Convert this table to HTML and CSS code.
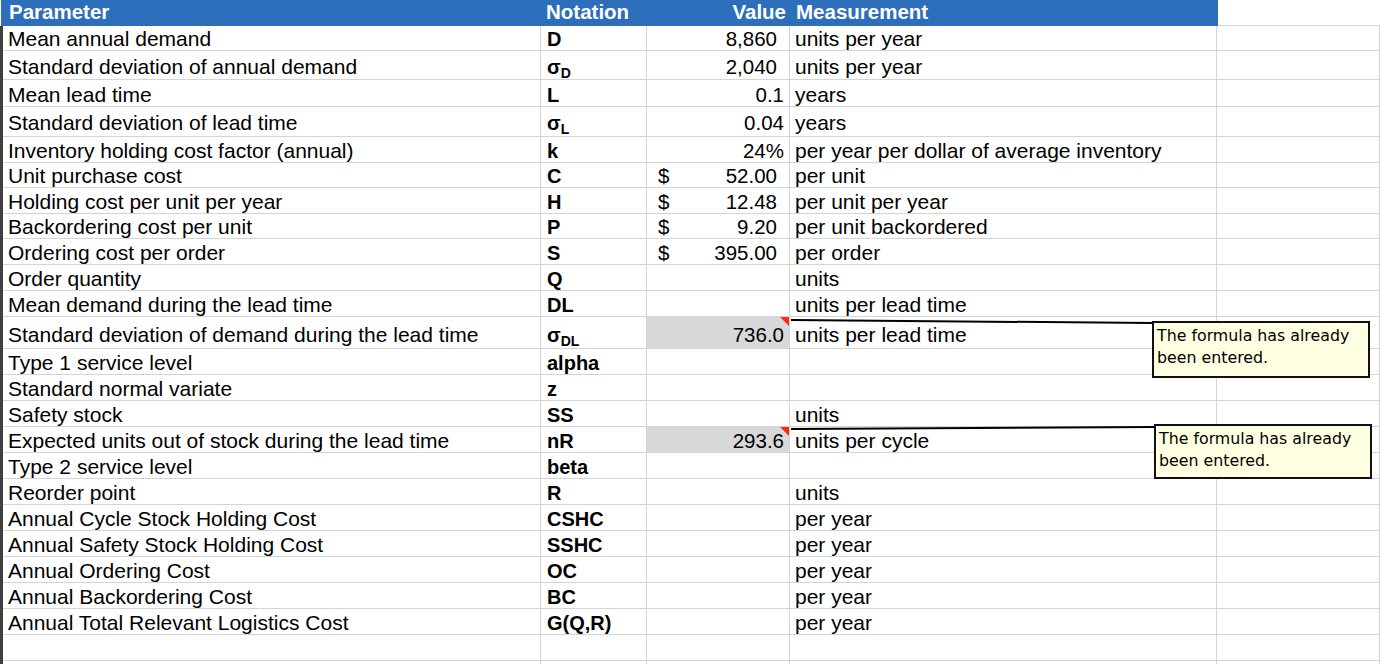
FILE: index.html
```html
<!DOCTYPE html>
<html>
<head>
<meta charset="utf-8">
<link rel="stylesheet" href="styles.css">
</head>
<body>
<div class="sheet">
  <div class="row head h26">
    <div class="c a hd">Parameter</div>
    <div class="c b hd">Notation</div>
    <div class="c v hd right">Value</div>
    <div class="c m hd">Measurement</div>
    <div class="c e"></div>
  </div>
  <div class="row h25"><div class="c a">Mean annual demand</div><div class="c b">D</div><div class="c v right pad12">8,860</div><div class="c m">units per year</div><div class="c e"></div></div>
  <div class="row h29"><div class="c a">Standard deviation of annual demand</div><div class="c b">σ<span class="sub">D</span></div><div class="c v right pad12">2,040</div><div class="c m">units per year</div><div class="c e"></div></div>
  <div class="row h27"><div class="c a">Mean lead time</div><div class="c b">L</div><div class="c v right">0.1</div><div class="c m">years</div><div class="c e"></div></div>
  <div class="row h30"><div class="c a">Standard deviation of lead time</div><div class="c b">σ<span class="sub">L</span></div><div class="c v right">0.04</div><div class="c m">years</div><div class="c e"></div></div>
  <div class="row h26"><div class="c a">Inventory holding cost factor (annual)</div><div class="c b">k</div><div class="c v right">24%</div><div class="c m">per year per dollar of average inventory</div><div class="c e"></div></div>
  <div class="row h25"><div class="c a">Unit purchase cost</div><div class="c b">C</div><div class="c v acc"><span>$</span><span>52.00</span></div><div class="c m">per unit</div><div class="c e"></div></div>
  <div class="row h26"><div class="c a">Holding cost per unit per year</div><div class="c b">H</div><div class="c v acc"><span>$</span><span>12.48</span></div><div class="c m">per unit per year</div><div class="c e"></div></div>
  <div class="row h25"><div class="c a">Backordering cost per unit</div><div class="c b">P</div><div class="c v acc"><span>$</span><span>9.20</span></div><div class="c m">per unit backordered</div><div class="c e"></div></div>
  <div class="row h26"><div class="c a">Ordering cost per order</div><div class="c b">S</div><div class="c v acc"><span>$</span><span>395.00</span></div><div class="c m">per order</div><div class="c e"></div></div>
  <div class="row h26"><div class="c a">Order quantity</div><div class="c b">Q</div><div class="c v"></div><div class="c m">units</div><div class="c e"></div></div>
  <div class="row h26"><div class="c a">Mean demand during the lead time</div><div class="c b">DL</div><div class="c v"></div><div class="c m">units per lead time</div><div class="c e"></div></div>
  <div class="row h32"><div class="c a">Standard deviation of demand during the lead time</div><div class="c b">σ<span class="sub">DL</span></div><div class="c v right fill">736.0</div><div class="c m">units per lead time</div><div class="c e"></div></div>
  <div class="row h26"><div class="c a">Type 1 service level</div><div class="c b">alpha</div><div class="c v"></div><div class="c m"></div><div class="c e"></div></div>
  <div class="row h26"><div class="c a">Standard normal variate</div><div class="c b">z</div><div class="c v"></div><div class="c m"></div><div class="c e"></div></div>
  <div class="row h26"><div class="c a">Safety stock</div><div class="c b">SS</div><div class="c v"></div><div class="c m">units</div><div class="c e"></div></div>
  <div class="row h26"><div class="c a">Expected units out of stock during the lead time</div><div class="c b">nR</div><div class="c v right fill">293.6</div><div class="c m">units per cycle</div><div class="c e"></div></div>
  <div class="row h26"><div class="c a">Type 2 service level</div><div class="c b">beta</div><div class="c v"></div><div class="c m"></div><div class="c e"></div></div>
  <div class="row h26"><div class="c a">Reorder point</div><div class="c b">R</div><div class="c v"></div><div class="c m">units</div><div class="c e"></div></div>
  <div class="row h26"><div class="c a">Annual Cycle Stock Holding Cost</div><div class="c b">CSHC</div><div class="c v"></div><div class="c m">per year</div><div class="c e"></div></div>
  <div class="row h26"><div class="c a">Annual Safety Stock Holding Cost</div><div class="c b">SSHC</div><div class="c v"></div><div class="c m">per year</div><div class="c e"></div></div>
  <div class="row h26"><div class="c a">Annual Ordering Cost</div><div class="c b">OC</div><div class="c v"></div><div class="c m">per year</div><div class="c e"></div></div>
  <div class="row h26"><div class="c a">Annual Backordering Cost</div><div class="c b">BC</div><div class="c v"></div><div class="c m">per year</div><div class="c e"></div></div>
  <div class="row h26"><div class="c a">Annual Total Relevant Logistics Cost</div><div class="c b">G(Q,R)</div><div class="c v"></div><div class="c m">per year</div><div class="c e"></div></div>
  <div class="row h26"><div class="c a"></div><div class="c b"></div><div class="c v"></div><div class="c m"></div><div class="c e"></div></div>
  <div class="row h26"><div class="c a"></div><div class="c b"></div><div class="c v"></div><div class="c m"></div><div class="c e"></div></div>
</div>

<svg class="connectors" width="1380" height="664" viewBox="0 0 1380 664">
  <line x1="791" y1="320" x2="1153" y2="323" stroke="#000" stroke-width="2"/>
  <line x1="791" y1="429" x2="1155" y2="427" stroke="#000" stroke-width="2"/>
</svg>
<div class="note note1">The formula has already been entered.</div>
<div class="note note2">The formula has already been entered.</div>
</body>
</html>
```

FILE: styles.css
```css
html, body {
  margin: 0;
  padding: 0;
  background: #fff;
}
body {
  position: relative;
  width: 1380px;
  height: 664px;
  overflow: hidden;
  font-family: "Liberation Sans", Arial, sans-serif;
  font-size: 21px;
  color: #000;
}
.sheet {
  display: flex;
  flex-direction: column;
}
.row {
  display: grid;
  grid-template-columns: 538px 106px 143px 427px 1fr;
  border-left: 3px solid #3f3f3f;
  box-sizing: border-box;
  flex: none;
}
.row.head {
  border-left: 1px solid #fff;
  grid-template-columns: 540px 106px 143px 428px 1fr;
}
.h25 { height: 25px; }
.h26 { height: 26px; }
.h27 { height: 27px; }
.h29 { height: 29px; }
.h30 { height: 30px; }
.h32 { height: 32px; }

.c {
  display: flex;
  align-items: flex-end;
  box-sizing: border-box;
  border-right: 1px solid #d4d4d4;
  border-bottom: 1px solid #d4d4d4;
  padding: 0 5px 1px 5px;
  line-height: 20px;
  white-space: nowrap;
  min-width: 0;
  position: relative;
}
.h29 .c { padding-bottom: 2px; }
.h30 .c, .h32 .c { padding-bottom: 3px; }
.c.a { padding-left: 5px; }
.c.b { font-weight: bold; padding-left: 6px; font-size: 20px; }
.c.v { justify-content: flex-start; font-size: 20.5px; }
.c.m { padding-left: 5px; }
.right { justify-content: flex-end !important; }
.pad12 { padding-right: 12px; }
.acc {
  justify-content: space-between !important;
  padding-left: 11px;
  padding-right: 12px;
}
.fill { background: #d8d8d8; }
.fill::after {
  content: "";
  position: absolute;
  top: 0;
  right: 0;
  width: 0;
  height: 0;
  border-top: 9px solid #ff2a12;
  border-left: 9px solid transparent;
}
.sub {
  font-size: 14px;
  line-height: 1;
  position: relative;
  top: 3px;
}

.head .hd {
  background: #2d6eba;
  color: #fff;
  font-weight: bold;
  font-size: 20.5px;
  border: none;
  padding-bottom: 4px;
}
.head .c.a { padding-left: 8px; }
.head .c.b { padding-left: 5px; }
.head .c.v { padding-right: 4px; }
.head .c.m { padding-left: 6px; }
.head .c.e { border-right: none; }

.connectors {
  position: absolute;
  left: 0;
  top: 0;
  pointer-events: none;
}
.note {
  position: absolute;
  box-sizing: border-box;
  width: 218px;
  background: #ffffe1;
  border: 2px solid #111;
  font-family: "DejaVu Sans", Verdana, sans-serif;
  font-size: 15.8px;
  line-height: 22px;
  padding: 2px 3px;
  color: #000;
}
.note1 { left: 1152px; top: 321px; height: 57px; }
.note2 { left: 1154px; top: 424px; height: 55px; }
```
